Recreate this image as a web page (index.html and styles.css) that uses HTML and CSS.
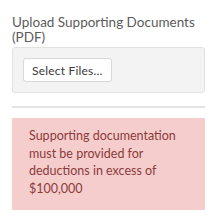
FILE: index.html
```html
<!DOCTYPE html>
<html lang="en">
<head>
    <meta charset="UTF-8">
    <title>Upload</title>
    <link rel="stylesheet" href="styles.css">
</head>
<body>
<div class="panel">
    <label class="field-label" for="files">Upload Supporting Documents (PDF)</label>
    <div class="upload">
        <button class="select-btn" id="files">Select Files...</button>
    </div>
    <hr class="divider">
    <div class="notice">
        Supporting documentation must be provided for deductions in excess of $100,000
    </div>
</div>
</body>
</html>
```

FILE: styles.css
```css
body {
    margin: 0;
    font-family: Lato, "Open Sans", sans-serif;
    background: #fff;
}

.panel {
    width: 193px;
    padding: 15px 0 0 12px;
}

.field-label {
    display: block;
    font-size: 13.5px;
    line-height: 15px;
    color: #5b5b5b;
    margin-bottom: 2px;
}

.upload {
    background: #f3f3f3;
    border: 1px solid #e2e2e2;
    border-radius: 3px;
    padding: 10px;
}

.select-btn {
    display: block;
    font-family: inherit;
    font-size: 12px;
    letter-spacing: 0.2px;
    color: #3a3a3a;
    background: #fff;
    border: 1px solid #d8d8d8;
    border-radius: 3px;
    padding: 0 8px;
    height: 24px;
}

.divider {
    border: 0;
    border-top: 2px solid #e3e3e3;
    margin: 13px 0 10px;
}

.notice {
    background: #f5cdcd;
    color: #8b3b3b;
    font-size: 12.5px;
    line-height: 17.5px;
    padding: 9px 17px 13px;
}
```
